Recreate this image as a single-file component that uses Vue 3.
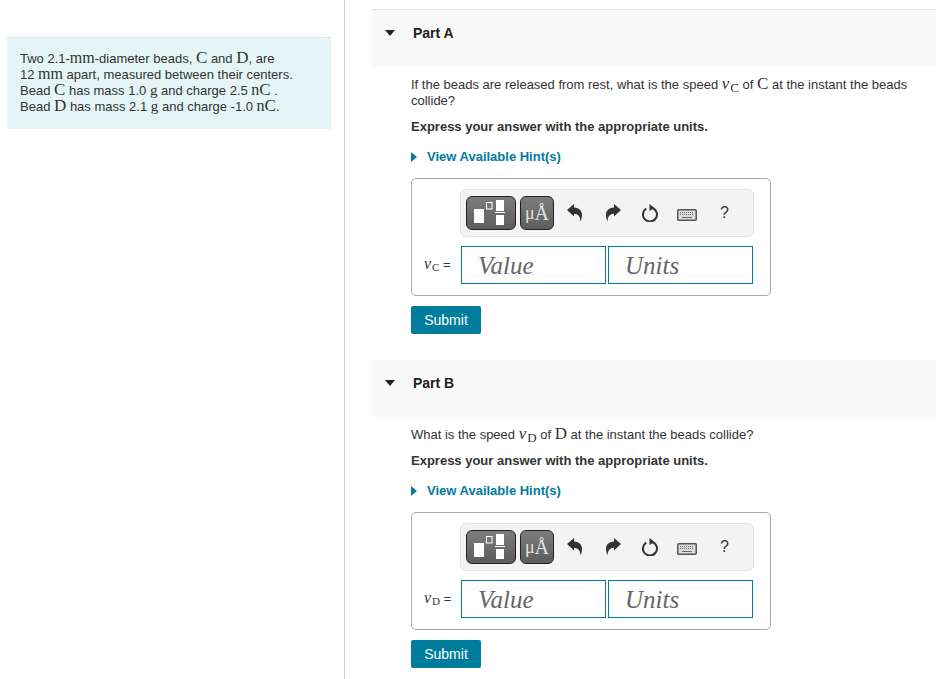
<script setup>
const parts = [
  { id: 'A', sub: 'C' },
  { id: 'B', sub: 'D' }
]
</script>

<template>
  <div class="page">
    <aside class="sidebar">
      <div class="intro">
        <p>Two 2.1-<span class="m mm">mm</span>-diameter beads, <span class="m big">C</span> and <span class="m big">D</span>, are</p>
        <p>12 <span class="m mm">mm</span> apart, measured between their centers.</p>
        <p>Bead <span class="m big">C</span> has mass 1.0 <span class="m gram">g</span> and charge 2.5 <span class="m mm">n</span><span class="m big">C</span> .</p>
        <p>Bead <span class="m big">D</span> has mass 2.1 <span class="m gram">g</span> and charge -1.0 <span class="m mm">n</span><span class="m big">C</span>.</p>
      </div>
    </aside>

    <main class="main">
      <section v-for="part in parts" :key="part.id" class="part" :class="'part-' + part.id">
        <header class="part-head">
          <span class="caret"></span>
          <h2>Part {{ part.id }}</h2>
        </header>

        <div class="part-body">
          <p v-if="part.id === 'A'" class="prompt">
            If the beads are released from rest, what is the speed <span class="m v">v</span><sub class="m">C</sub> of <span class="m big">C</span> at the instant the beads collide?
          </p>
          <p v-else class="prompt">
            What is the speed <span class="m v">v</span><sub class="m">D</sub> of <span class="m big">D</span> at the instant the beads collide?
          </p>
          <p class="express">Express your answer with the appropriate units.</p>
          <a class="hints"><span class="hint-arrow"></span>View Available Hint(s)</a>

          <div class="answer">
            <div class="toolbar">
              <button class="tool tool-frac" aria-label="templates">
                <svg width="38" height="28" viewBox="0 0 38 28">
                  <rect x="2" y="10" width="10" height="14" fill="#fff" />
                  <rect x="14.500" y="3.500" width="5.500" height="6.500" fill="none" stroke="#fff" />
                  <rect x="24" y="1" width="8" height="11" fill="#fff" />
                  <rect x="23" y="13" width="10" height="1" fill="#fff" />
                  <rect x="24" y="16" width="8" height="10" fill="#fff" />
                </svg>
              </button>
              <button class="tool tool-unit"><span class="mu">μ</span>Å</button>
              <svg class="ic ic-undo" width="15" height="18" viewBox="0 0 15 18">
                <path d="M0 6 7 0v3.500c4.500.2 8 2.800 8 7.500 0 2.300-.7 4.700-1.500 6.500-.2-4-1.500-7.500-6.500-7.700V12.500z" fill="#333" />
              </svg>
              <svg class="ic ic-redo" width="15" height="18" viewBox="0 0 15 18">
                <path d="M15 6 8 0v3.500C3.500 3.700 0 6.300 0 11c0 2.300.7 4.700 1.500 6.500.2-4 1.500-7.500 6.500-7.700V12.500z" fill="#333" />
              </svg>
              <svg class="ic ic-reset" width="16" height="18" viewBox="0 0 16 18">
                <path d="M4.200 4.600a7 7 0 1 0 6.300-.6" fill="none" stroke="#333" stroke-width="2" />
                <path d="M7.500 0 12.500 4 7.500 7z" fill="#333" />
              </svg>
              <svg class="ic ic-keys" width="20" height="12" viewBox="0 0 20 12">
                <rect x=".75" y=".75" width="18.500" height="10.500" rx="1" fill="#ddd" stroke="#555" stroke-width="1.500" />
                <path d="M3 3.500h14M3 5.500h14" stroke="#666" stroke-dasharray="1 1" />
                <path d="M5 8.500h10" stroke="#666" />
              </svg>
              <span class="help">?</span>
            </div>
            <div class="answer-row">
              <label class="answer-label"><span class="m v">v</span><sub class="m">{{ part.sub }}</sub> =</label>
              <div class="field field-value">Value</div>
              <div class="field field-units">Units</div>
            </div>
          </div>

          <button class="submit">Submit</button>
        </div>
      </section>
    </main>
  </div>
</template>

<style>
html, body {
  margin: 0;
  background: #fff;
  overflow: hidden;
}
</style>

<style scoped>
.page {
  display: flex;
  width: 949px;
  height: 679px;
  overflow: hidden;
  font-family: "Liberation Sans", Arial, sans-serif;
  font-size: 13px;
  line-height: 16px;
  color: #333;
}

.sidebar {
  width: 345px;
  height: 679px;
  flex: none;
  box-sizing: border-box;
  border-right: 1px solid #c3d3dc;
  padding: 37px 13px 0 7px;
}

.intro {
  background: #e5f5f7;
  border-top: 1px solid #d9e5e8;
  height: 92px;
  box-sizing: border-box;
  padding: 13px 13px 0;
}

.intro p {
  margin: 0;
  height: 16px;
  white-space: nowrap;
}

.m {
  font-family: "Liberation Serif", "Times New Roman", serif;
  line-height: 0;
}

.mm {
  font-size: 16px;
}

.gram {
  font-size: 15px;
}

.big {
  font-size: 17px;
}

.v {
  font-style: italic;
  font-size: 17px;
  letter-spacing: 1px;
}

sub.m {
  font-size: 13px;
  vertical-align: -3px;
}

.main {
  width: 565px;
  margin-left: 26px;
  padding-top: 9px;
  flex: none;
}

.part-A {
  border-top: 1px solid #e3e3e3;
  height: 350px;
}

.part-head {
  display: flex;
  height: 57px;
  background: #f9f9f9;
  padding: 15px 0 0 14px;
  box-sizing: border-box;
}

.caret {
  width: 0;
  height: 0;
  margin-top: 5px;
  border-left: 5.500px solid transparent;
  border-right: 5.500px solid transparent;
  border-top: 6px solid #222;
}

.part-head h2 {
  margin: 0 0 0 18px;
  font-size: 14px;
  font-weight: bold;
  line-height: 16px;
  color: #222;
}

.part-body {
  padding: 10px 0 0 40px;
}

.prompt {
  margin: 0;
  width: 505px;
}

.express {
  margin: 10px 0 0;
  font-weight: bold;
}

.hints {
  display: flex;
  align-items: center;
  margin-top: 14px;
  font-weight: bold;
  color: #007c9c;
}

.hint-arrow {
  width: 0;
  height: 0;
  margin-right: 10px;
  border-top: 5.500px solid transparent;
  border-bottom: 5.500px solid transparent;
  border-left: 6px solid #007c9c;
}

.answer {
  width: 360px;
  height: 118px;
  margin-top: 13px;
  box-sizing: border-box;
  border: 1px solid #aaa;
  border-radius: 5px;
  padding: 10px 0 0 48px;
}

.toolbar {
  display: flex;
  align-items: center;
  width: 294px;
  height: 48px;
  box-sizing: border-box;
  background: #f3f3f3;
  border: 1px solid #e2e2e2;
  border-radius: 6px;
  padding-left: 5px;
}

.tool {
  height: 34px;
  box-sizing: border-box;
  padding: 0;
  border: 1px solid #222;
  border-radius: 6px;
  background: linear-gradient(#7d7d7d, #5c5c5c);
  color: #e4e4e4;
  display: flex;
  align-items: center;
  justify-content: center;
}

.tool-frac {
  width: 50px;
}

.tool-unit {
  width: 34px;
  margin-left: 4px;
  font-family: "Liberation Serif", serif;
  font-size: 20px;
}

.mu {
  font-size: 18px;
}

.ic {
  flex: none;
}

.ic-undo {
  margin-left: 13px;
}

.ic-redo {
  margin-left: 24px;
}

.ic-reset {
  margin-left: 21px;
}

.ic-keys {
  margin-left: 19px;
  margin-top: 4px;
}

.help {
  margin-left: 23px;
  font-size: 16px;
  color: #333;
}

.answer-row {
  display: flex;
  align-items: center;
  margin-top: 9px;
  margin-left: 1px;
  position: relative;
}

.answer-label {
  position: absolute;
  left: -37px;
  top: 11px;
  font-size: 13px;
  white-space: nowrap;
}

.answer-label .v {
  font-size: 16px;
}

.answer-label sub.m {
  font-size: 11px;
  vertical-align: -2px;
}

.field {
  width: 145px;
  height: 38px;
  box-sizing: border-box;
  border: 1px solid #007c9c;
  background: #fff;
  padding-left: 16px;
  font-family: "Liberation Serif", serif;
  font-style: italic;
  font-size: 25px;
  line-height: 37px;
  color: #666;
}

.field-units {
  margin-left: 2px;
}

.submit {
  display: block;
  width: 70px;
  height: 28px;
  margin-top: 10px;
  padding: 0;
  border: none;
  border-radius: 2px;
  background: #007c9c;
  color: #fff;
  font-family: "Liberation Sans", Arial, sans-serif;
  font-size: 14px;
}
</style>
